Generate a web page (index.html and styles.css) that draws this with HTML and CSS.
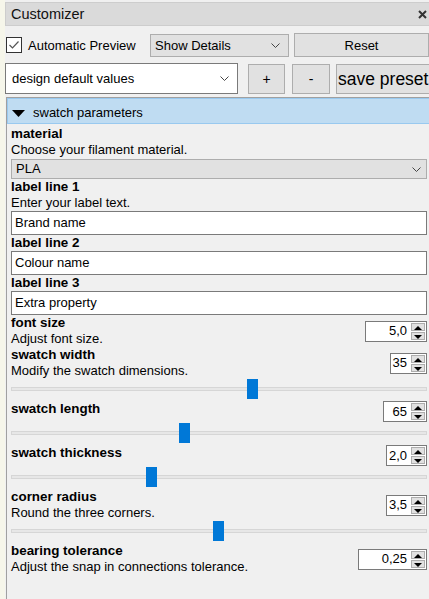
FILE: index.html
```html
<!DOCTYPE html>
<html>
<head>
<meta charset="utf-8">
<link rel="stylesheet" href="styles.css">
</head>
<body>
<div class="app">
  <div class="titlebar">
    <span class="title">Customizer</span>
    <svg class="close" width="9" height="9" viewBox="0 0 9 9"><path d="M1 1 L8 8 M8 1 L1 8" stroke="#333" stroke-width="2" fill="none"/></svg>
  </div>

  <div class="row1">
    <label class="check-wrap">
      <span class="checkbox"><svg width="14" height="14" viewBox="0 0 14 14"><path d="M2.5 7 L5.5 10 L11.5 3.5" stroke="#555" stroke-width="1.2" fill="none"/></svg></span>
      <span>Automatic Preview</span>
    </label>
    <div class="combo combo-grey show-details">
      <span>Show Details</span>
      <svg class="chev" width="9" height="5" viewBox="0 0 9 5"><path d="M0.5 0.5 L4.5 4.5 L8.5 0.5" fill="none" stroke="#444"/></svg>
    </div>
    <div class="btn reset">Reset</div>
  </div>

  <div class="row2">
    <div class="combo combo-white presets">
      <span>design default values</span>
      <svg class="chev" width="9" height="5" viewBox="0 0 9 5"><path d="M0.5 0.5 L4.5 4.5 L8.5 0.5" fill="none" stroke="#444"/></svg>
    </div>
    <div class="btn small plus">+</div>
    <div class="btn small minus">-</div>
    <div class="btn save">save preset</div>
  </div>

  <div class="panel">
    <div class="panel-header">
      <svg class="tri" width="13" height="7" viewBox="0 0 13 7"><path d="M0 0 L13 0 L6.5 7 Z" fill="#000"/></svg>
      <span>swatch parameters</span>
    </div>
    <div class="content">
      <div class="label">material</div>
      <div class="desc">Choose your filament material.</div>
      <div class="combo combo-grey field-select">
        <span>PLA</span>
        <svg class="chev" width="9" height="5" viewBox="0 0 9 5"><path d="M0.5 0.5 L4.5 4.5 L8.5 0.5" fill="none" stroke="#444"/></svg>
      </div>

      <div class="label">label line 1</div>
      <div class="desc">Enter your label text.</div>
      <div class="textfield">Brand name</div>

      <div class="label">label line 2</div>
      <div class="textfield">Colour name</div>

      <div class="label">label line 3</div>
      <div class="textfield">Extra property</div>

      <div class="param">
        <div class="param-text">
          <div class="label">font size</div>
          <div class="desc">Adjust font size.</div>
        </div>
        <div class="spin w62"><span class="val">5,0</span><span class="arrows"><span class="arr up"></span><span class="arr down"></span></span></div>
      </div>

      <div class="param">
        <div class="param-text">
          <div class="label">swatch width</div>
          <div class="desc">Modify the swatch dimensions.</div>
        </div>
        <div class="spin w37"><span class="val">35</span><span class="arrows"><span class="arr up"></span><span class="arr down"></span></span></div>
      </div>
      <div class="slider"><div class="track"></div><div class="handle" style="left:236px"></div></div>

      <div class="param single">
        <div class="param-text">
          <div class="label">swatch length</div>
        </div>
        <div class="spin w44"><span class="val">65</span><span class="arrows"><span class="arr up"></span><span class="arr down"></span></span></div>
      </div>
      <div class="slider"><div class="track"></div><div class="handle" style="left:168px"></div></div>

      <div class="param single">
        <div class="param-text">
          <div class="label">swatch thickness</div>
        </div>
        <div class="spin w41"><span class="val">2,0</span><span class="arrows"><span class="arr up"></span><span class="arr down"></span></span></div>
      </div>
      <div class="slider"><div class="track"></div><div class="handle" style="left:135px"></div></div>

      <div class="param">
        <div class="param-text">
          <div class="label">corner radius</div>
          <div class="desc">Round the three corners.</div>
        </div>
        <div class="spin w41"><span class="val">3,5</span><span class="arrows"><span class="arr up"></span><span class="arr down"></span></span></div>
      </div>
      <div class="slider"><div class="track"></div><div class="handle" style="left:202px"></div></div>

      <div class="param">
        <div class="param-text">
          <div class="label">bearing tolerance</div>
          <div class="desc">Adjust the snap in connections tolerance.</div>
        </div>
        <div class="spin w69"><span class="val">0,25</span><span class="arrows"><span class="arr up"></span><span class="arr down"></span></span></div>
      </div>
    </div>
  </div>
</div>
</body>
</html>
```

FILE: styles.css
```css
html, body {
  margin: 0;
  padding: 0;
}
body {
  background: #f0f0f0;
  font-family: "Liberation Sans", Arial, sans-serif;
  font-size: 13px;
  color: #000;
  width: 429px;
  height: 599px;
  overflow: hidden;
}
.app {
  box-sizing: border-box;
  height: 599px;
  border-left: 5px solid #f6f6ea;
  padding-top: 2px;
}
.titlebar {
  box-sizing: border-box;
  height: 24px;
  background: #dadada;
  border: 1px solid #cdcdcd;
  border-right: none;
  display: flex;
  align-items: center;
  justify-content: space-between;
  padding: 0 2px 0 5px;
  font-size: 14.5px;
  color: #111;
}
.close {
  display: block;
}
.row1 {
  display: flex;
  align-items: center;
  height: 24px;
  margin-top: 7px;
}
.check-wrap {
  width: 145px;
  display: flex;
  align-items: center;
  gap: 6px;
  padding-left: 1px;
  box-sizing: border-box;
}
.checkbox {
  box-sizing: border-box;
  width: 16px;
  height: 16px;
  border: 1px solid #333;
  background: #fff;
  display: flex;
  align-items: center;
  justify-content: center;
}
.checkbox svg {
  display: block;
}
.combo {
  box-sizing: border-box;
  display: flex;
  align-items: center;
  justify-content: space-between;
  padding: 0 8px 0 4px;
}
.combo .chev {
  display: block;
}
.combo-grey {
  background: #e1e1e1;
  border: 1px solid #adadad;
}
.combo-white {
  background: #fff;
  border: 1px solid #7a7a7a;
}
.show-details {
  width: 139px;
  height: 23px;
}
.btn {
  box-sizing: border-box;
  background: #e1e1e1;
  border: 1px solid #adadad;
  display: flex;
  align-items: center;
  justify-content: center;
  white-space: nowrap;
}
.reset {
  flex: 1;
  height: 24px;
  margin-left: 5px;
}
.row2 {
  display: flex;
  align-items: flex-end;
  height: 31px;
  margin-top: 6px;
}
.presets {
  width: 233px;
  height: 31px;
  padding-left: 6px;
}
.small {
  height: 30px;
  font-size: 14px;
}
.plus {
  width: 37px;
  margin-left: 10px;
}
.minus {
  width: 38px;
  margin-left: 7px;
}
.save {
  flex: 1;
  min-width: 0;
  overflow: hidden;
  height: 30px;
  margin-left: 6px;
  font-size: 17.5px;
  justify-content: flex-start;
  padding-left: 1px;
  border-right: none;
}
.panel {
  margin-top: 3px;
  margin-left: 1px;
  border-left: 1px solid #a0a0a0;
  border-top: 1px solid #a0a0a0;
  height: 520px;
}
.panel-header {
  box-sizing: border-box;
  height: 26px;
  background: #bfdcf2;
  border: 1px solid #99c9ef;
  border-right: none;
  display: flex;
  align-items: center;
  padding: 2px 0 0 4px;
  gap: 8px;
}
.panel-header .tri {
  display: block;
  margin-top: 2px;
}
.content {
  padding: 2px 2px 0 4px;
  line-height: 16px;
}
.label {
  font-weight: bold;
  font-size: 13.4px;
  height: 16px;
}
.desc {
  height: 16px;
}
.field-select {
  height: 20px;
  margin-top: 1px;
  padding-right: 5px;
}
.textfield {
  box-sizing: border-box;
  height: 24px;
  background: #fff;
  border: 1px solid #7a7a7a;
  display: flex;
  align-items: center;
  padding-left: 3px;
}
.param {
  display: flex;
  align-items: center;
  justify-content: space-between;
}
.param.single {
  align-items: flex-start;
  height: 22px;
}
.spin {
  box-sizing: border-box;
  height: 21px;
  background: #fff;
  border: 1px solid #7a7a7a;
  display: flex;
  align-items: center;
  justify-content: flex-end;
  padding: 1px;
}
.spin .val {
  flex: 1;
  text-align: right;
  padding-right: 4px;
}
.w62 { width: 62px; }
.w37 { width: 37px; }
.w44 { width: 44px; }
.w41 { width: 41px; }
.w69 { width: 69px; }
.arrows {
  display: flex;
  flex-direction: column;
  width: 14px;
  height: 17px;
  gap: 1px;
}
.arr {
  box-sizing: border-box;
  flex: 1;
  background: #e1e1e1;
  border: 1px solid #adadad;
  position: relative;
}
.arr::after {
  content: "";
  position: absolute;
  left: 2px;
  width: 0;
  height: 0;
  border-left: 4px solid transparent;
  border-right: 4px solid transparent;
}
.arr.up::after {
  top: 2px;
  border-bottom: 4px solid #000;
}
.arr.down::after {
  top: 2px;
  border-top: 4px solid #000;
}
.slider {
  position: relative;
  height: 22px;
}
.track {
  position: absolute;
  left: 0;
  right: 0;
  top: 8px;
  height: 4px;
  box-sizing: border-box;
  background: #e7e7e7;
  border: 1px solid #d6d6d6;
}
.handle {
  position: absolute;
  top: 0;
  width: 11px;
  height: 20px;
  background: #0078d7;
}
```
